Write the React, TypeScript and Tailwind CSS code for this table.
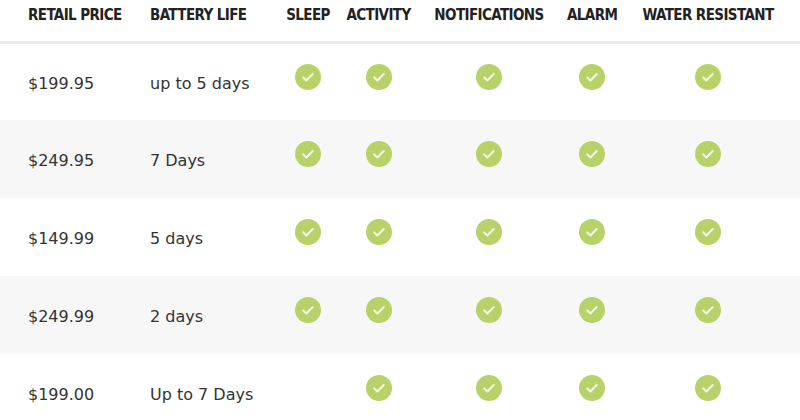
const rows: { price: string; battery: string; checks: boolean[] }[] = [
  { price: "$199.95", battery: "up to 5 days", checks: [true, true, true, true, true] },
  { price: "$249.95", battery: "7 Days", checks: [true, true, true, true, true] },
  { price: "$149.99", battery: "5 days", checks: [true, true, true, true, true] },
  { price: "$249.99", battery: "2 days", checks: [true, true, true, true, true] },
  { price: "$199.00", battery: "Up to 7 Days", checks: [false, true, true, true, true] },
];

const features = ["SLEEP", "ACTIVITY", "NOTIFICATIONS", "ALARM", "WATER RESISTANT"];

const cols = "grid grid-cols-[122px_148px_76px_65px_156px_49px_1fr]";

function Check() {
  return (
    <svg width="26" height="26" viewBox="0 0 26 26" className="block">
      <circle cx="13" cy="13" r="13" fill="#b6d268" />
      <path
        d="M8.3 13.4l3.1 3 6.3-6.3"
        fill="none"
        stroke="#f3f8e6"
        strokeWidth="2.1"
        strokeLinecap="round"
        strokeLinejoin="round"
      />
    </svg>
  );
}

export default function App() {
  return (
    <div className="w-[800px] h-[420px] overflow-hidden bg-white">
      {/* Header */}
      <div
        className={`${cols} h-[44px] border-b-[3px] border-[#ebebeb] pt-[4px] text-[15px] font-bold text-[#222] tracking-[-0.6px]`}
        style={{ fontFamily: '"DejaVu Sans Condensed", "Liberation Sans", sans-serif' }}
      >
        <div className="pl-[28px] whitespace-nowrap">RETAIL PRICE</div>
        <div className="pl-[28px] whitespace-nowrap">BATTERY LIFE</div>
        {features.map((f) => (
          <div key={f} className="text-center whitespace-nowrap">
            {f}
          </div>
        ))}
      </div>

      {/* Rows */}
      {rows.map((r, i) => (
        <div
          key={i}
          className={`${cols} ${i === 0 ? "h-[76px]" : "h-[78px]"} ${
            i % 2 === 1 ? "bg-[#f7f7f7]" : "bg-white"
          } text-[16px] text-[#333]`}
          style={{ fontFamily: '"DejaVu Sans", sans-serif' }}
        >
          <div className="pl-[28px] pt-[3px] flex items-center">{r.price}</div>
          <div className="pl-[28px] pt-[3px] flex items-center whitespace-nowrap">{r.battery}</div>
          {r.checks.map((c, j) => (
            <div key={j} className={`flex justify-center ${i === 0 ? "pt-[20px]" : "pt-[21px]"}`}>
              {c && <Check />}
            </div>
          ))}
        </div>
      ))}
    </div>
  );
}
